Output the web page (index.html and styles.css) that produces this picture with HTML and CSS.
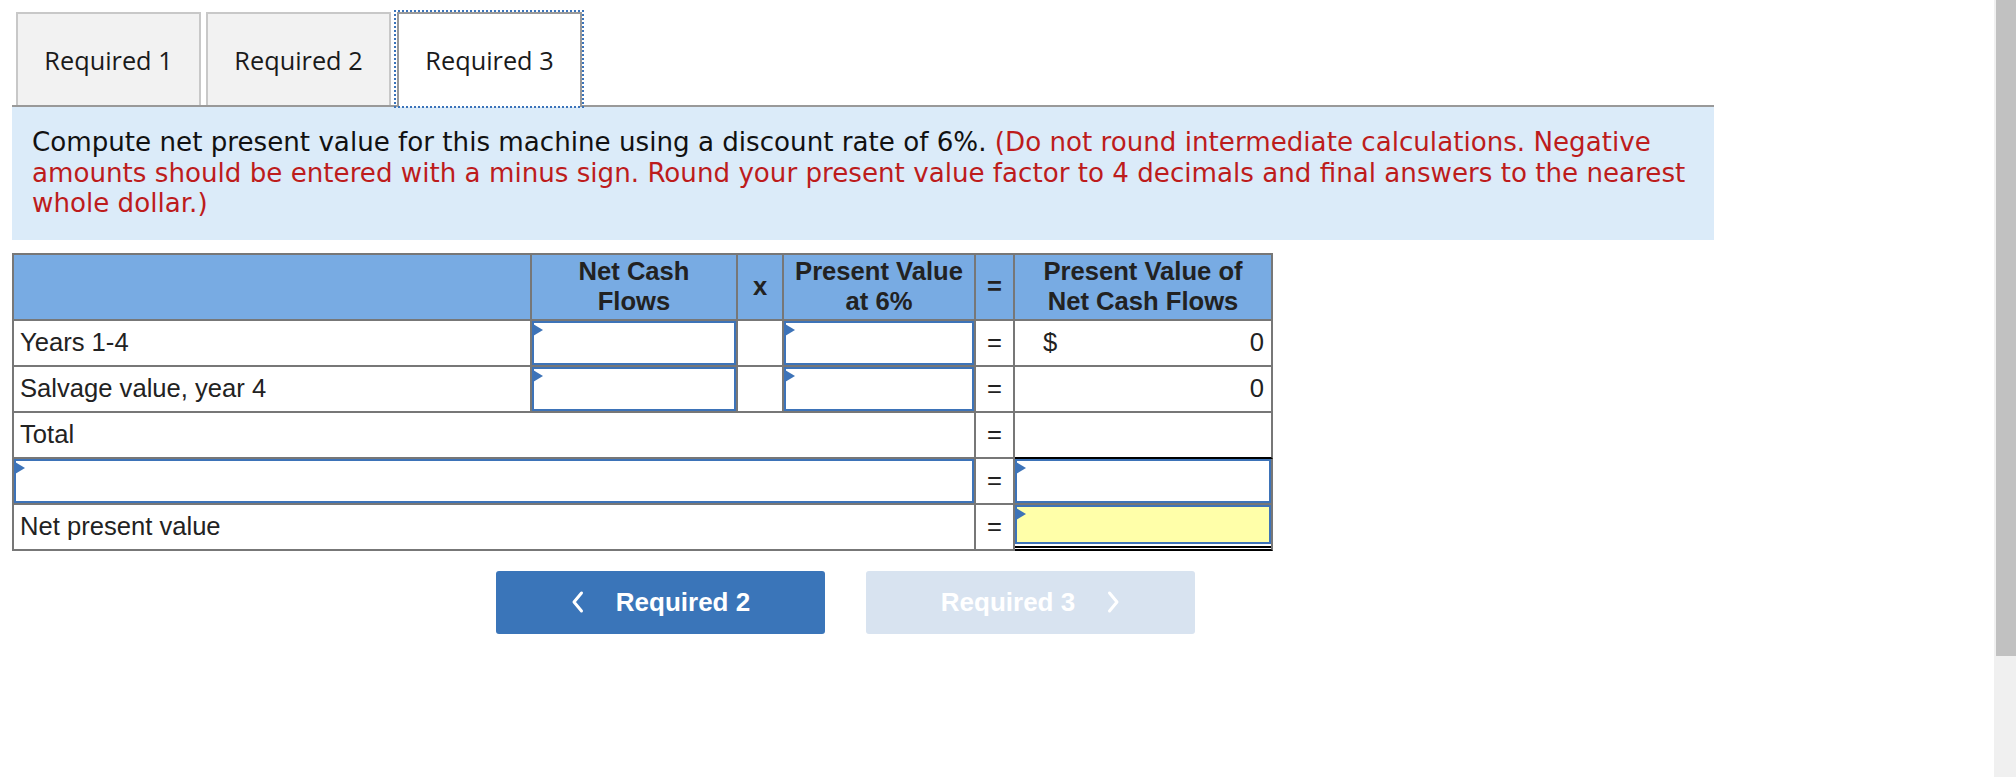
FILE: index.html
```html
<!DOCTYPE html>
<html lang="en">
<head>
<meta charset="utf-8">
<title>Required 3</title>
<link rel="stylesheet" href="styles.css">
</head>
<body>
<div class="screen">
  <main class="page">
    <div class="tabs" role="tablist">
      <button class="tab" role="tab">Required 1</button>
      <button class="tab" role="tab">Required 2</button>
      <button class="tab tab-active" role="tab">Required 3</button>
    </div>

    <div class="prompt">Compute net present value for this machine using a discount rate of 6%. <span class="hint">(Do not round intermediate calculations. Negative amounts should be entered with a minus sign. Round your present value factor to 4 decimals and final answers to the nearest whole dollar.)</span></div>

    <table class="npv">
      <colgroup>
        <col class="c-label">
        <col class="c-ncf">
        <col class="c-op">
        <col class="c-pv">
        <col class="c-eq">
        <col class="c-res">
      </colgroup>
      <thead>
        <tr class="head">
          <th></th>
          <th>Net Cash<br>Flows</th>
          <th>x</th>
          <th>Present Value<br>at 6%</th>
          <th>=</th>
          <th>Present Value of<br>Net Cash Flows</th>
        </tr>
      </thead>
      <tbody>
        <tr>
          <td class="label">Years 1-4</td>
          <td><span class="field"><input type="text" aria-label="Net cash flows years 1-4"></span></td>
          <td></td>
          <td><span class="field"><input type="text" aria-label="Present value factor years 1-4"></span></td>
          <td class="eq">=</td>
          <td><div class="amount"><span>$</span><span>0</span></div></td>
        </tr>
        <tr>
          <td class="label">Salvage value, year 4</td>
          <td><span class="field"><input type="text" aria-label="Net cash flows salvage"></span></td>
          <td></td>
          <td><span class="field"><input type="text" aria-label="Present value factor salvage"></span></td>
          <td class="eq">=</td>
          <td><div class="amount"><span></span><span>0</span></div></td>
        </tr>
        <tr>
          <td class="label" colspan="4">Total</td>
          <td class="eq">=</td>
          <td class="sum-above"></td>
        </tr>
        <tr>
          <td colspan="4"><span class="field"><input type="text" aria-label="Item"></span></td>
          <td class="eq">=</td>
          <td><span class="field"><input type="text" aria-label="Amount"></span></td>
        </tr>
        <tr>
          <td class="label" colspan="4">Net present value</td>
          <td class="eq">=</td>
          <td class="final"><div class="final-wrap"><span class="field field-final"><input type="text" class="input-yellow" aria-label="Net present value"></span></div></td>
        </tr>
      </tbody>
    </table>

    <nav class="nav">
      <button class="nav-btn prev">
        <svg class="chev" width="13" height="24" viewBox="0 0 13 24" aria-hidden="true"><polyline points="10.5,3 3,12 10.5,21" fill="none" stroke="#fff" stroke-width="3" stroke-linecap="round" stroke-linejoin="round"/></svg>
        <span>Required 2</span>
      </button>
      <button class="nav-btn next">
        <span>Required 3</span>
        <svg class="chev" width="13" height="24" viewBox="0 0 13 24" aria-hidden="true"><polyline points="2.5,3 10,12 2.5,21" fill="none" stroke="#fff" stroke-width="3" stroke-linecap="round" stroke-linejoin="round"/></svg>
      </button>
    </nav>
  </main>
  <div class="scrollbar"><div class="scroll-thumb"></div></div>
</div>
</body>
</html>
```
FILE: styles.css
```css
* {
  box-sizing: border-box;
}

html,
body {
  margin: 0;
  padding: 0;
  background: #ffffff;
}

body {
  font-family: "Liberation Sans", Arial, sans-serif;
  color: #222222;
}

.screen {
  display: flex;
  min-height: 777px;
}

.page {
  flex: 1;
  padding: 12px 0 0 12px;
}

/* scrollbar strip on the right */
.scrollbar {
  flex: none;
  width: 22px;
  background: #f0f0f0;
}

.scroll-thumb {
  margin-left: 2px;
  height: 656px;
  background: #c1c1c1;
}

/* tabs */
.tabs {
  display: flex;
  align-items: flex-start;
  gap: 5px;
  width: 1702px;
  height: 95px;
  padding-left: 4px;
  border-bottom: 2px solid #999999;
}

.tab {
  position: relative;
  width: 185px;
  height: 93px;
  margin: 0;
  padding: 0;
  background: #f2f2f2;
  border: 2px solid #c8c8c8;
  border-bottom: 0;
  font-family: "Open Sans", "Noto Sans", sans-serif;
  font-size: 25.3px;
  color: #1a1a1a;
  cursor: pointer;
}

.tab-active {
  height: 95px;
  margin-left: 1px;
  padding-bottom: 2px;
  background: #ffffff;
  border-color: #9a9a9a;
}

.tab-active::after {
  content: "";
  position: absolute;
  top: -4px;
  left: -5px;
  right: -4px;
  bottom: -1px;
  border: 2px dotted #3b73b9;
}

/* instruction panel */
.prompt {
  width: 1702px;
  padding: 20px 20px 21px 20px;
  background: #dbebf9;
  font-family: "DejaVu Sans", Verdana, sans-serif;
  font-size: 26.15px;
  line-height: 30.6px;
  color: #111111;
}

.hint {
  color: #bd1c1c;
}

/* table */
.npv {
  margin-top: 13px;
  width: 1261px;
  table-layout: fixed;
  border-collapse: separate;
  border-spacing: 0;
  border-left: 2px solid #777777;
  border-top: 2px solid #777777;
  font-size: 25.6px;
}

.c-label { width: 518px; }
.c-ncf { width: 206px; }
.c-op { width: 46px; }
.c-pv { width: 192px; }
.c-eq { width: 39px; }
.c-res { width: 258px; }

.npv th,
.npv td {
  padding: 0;
  border-right: 2px solid #777777;
  border-bottom: 2px solid #777777;
  vertical-align: middle;
}

.head {
  height: 66px;
}

.npv tbody tr {
  height: 46px;
}

.npv th {
  background: #78abe3;
  font-weight: bold;
  line-height: 30px;
  text-align: center;
  color: #222222;
  padding-bottom: 2px;
}

.label {
  padding-left: 6px !important;
  color: #222222;
}

.eq {
  text-align: center;
}

.amount {
  display: flex;
  justify-content: space-between;
  padding: 0 7px 0 28px;
}

.sum-above {
  border-bottom-color: #000000 !important;
}

.final {
  border-bottom-color: #000000 !important;
}

.final-wrap {
  margin-bottom: 1px;
  padding-bottom: 2px;
  border-bottom: 2px solid #000000;
}

/* inputs */
.field {
  position: relative;
  display: block;
  height: 44px;
}

.field::before {
  content: "";
  position: absolute;
  left: 1px;
  top: 3px;
  border-left: 10px solid #3d73b8;
  border-top: 6px solid transparent;
  border-bottom: 6px solid transparent;
}

.field input {
  display: block;
  width: 100%;
  height: 44px;
  margin: 0;
  padding: 0 8px;
  border: 2px solid #3d73b8;
  border-radius: 0;
  background: #ffffff;
  font: inherit;
  outline: none;
}

.field-final {
  height: 39px;
}

.field-final .input-yellow {
  height: 39px;
  background: #ffffa9;
}

/* navigation buttons */
.nav {
  display: flex;
  gap: 41px;
  margin: 20px 0 0 484px;
}

.nav-btn {
  display: flex;
  align-items: center;
  justify-content: center;
  gap: 32px;
  width: 329px;
  height: 63px;
  margin: 0;
  padding: 0;
  border: 0;
  border-radius: 3px;
  font-family: "Liberation Sans", Arial, sans-serif;
  font-weight: bold;
  font-size: 26px;
  color: #ffffff;
  cursor: pointer;
}

.prev {
  background: #3a75b9;
}

.next {
  background: #d8e3f0;
}

.chev {
  display: block;
}
```
